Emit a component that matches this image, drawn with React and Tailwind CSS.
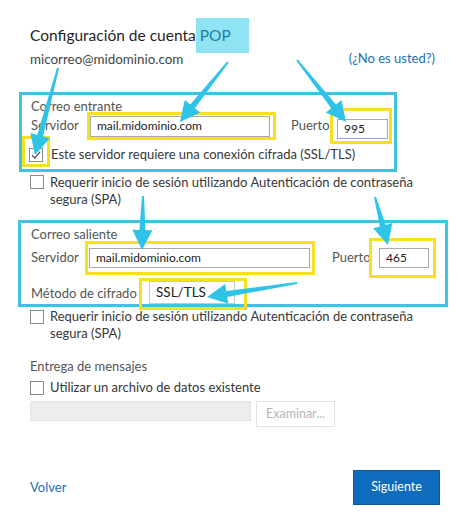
import React from 'react';

// Flecha cónica (cola fina, punta ancha) de (x1,y1) a (x2,y2)
function arrowPoints(x1, y1, x2, y2, w0 = 2, w1 = 6, hw = 20, hl = 20) {
  const dx = x2 - x1;
  const dy = y2 - y1;
  const len = Math.hypot(dx, dy);
  const ux = dx / len;
  const uy = dy / len;
  const nx = -uy;
  const ny = ux;
  const bx = x2 - ux * hl;
  const by = y2 - uy * hl;
  const p = (x, y) => `${x.toFixed(1)},${y.toFixed(1)}`;
  return [
    p(x1 + (nx * w0) / 2, y1 + (ny * w0) / 2),
    p(bx + (nx * w1) / 2, by + (ny * w1) / 2),
    p(bx + (nx * hw) / 2, by + (ny * hw) / 2),
    p(x2, y2),
    p(bx - (nx * hw) / 2, by - (ny * hw) / 2),
    p(bx - (nx * w1) / 2, by - (ny * w1) / 2),
    p(x1 - (nx * w0) / 2, y1 - (ny * w0) / 2),
  ].join(' ');
}

const arrows = [
  [58, 68, 35, 155],
  [228, 62, 180, 122],
  [297, 60, 346, 122],
  [143, 196, 142, 250],
  [375, 197, 388, 245],
  [297, 283, 207, 297],
];

function Checkbox({ checked = false }) {
  return (
    <span className="flex h-[14px] w-[14px] shrink-0 items-center justify-center border border-[#8a8a8a] bg-white">
      {checked ? (
        <svg width="12" height="12" viewBox="0 0 12 12">
          <path d="M2 6.2 L4.8 9 L10.2 2.6" fill="none" stroke="#555" strokeWidth="1.3" />
        </svg>
      ) : null}
    </span>
  );
}

function Input({ value, className }) {
  return (
    <div className={`flex items-center border border-[#a9a9a9] bg-white pl-[6px] text-[12px] text-[#222] ${className}`}>
      {value}
    </div>
  );
}

export default function App() {
  return (
    <div
      className="relative h-[517px] w-[474px] overflow-hidden bg-white pl-[30px] pr-[34px] text-[13px] text-[#3b3b3b]"
      style={{ fontFamily: 'Lato, "Noto Sans", sans-serif' }}
    >
      {/* Título */}
      <div className="mt-[18px] flex h-[35px] items-center text-[15.5px] text-[#1f1f1f]">
        <span>Configuración de cuenta</span>
        <span className="flex h-[35px] items-center bg-[#8fe3f2] pl-[4px] pr-[18px] text-[#1d7ea6]">POP</span>
      </div>

      <div className="-mt-[4px] flex h-[20px] items-center justify-between text-[#444]">
        <span className="text-[13.4px]">micorreo@midominio.com</span>
        <span className="mr-[5px] text-[#1b6fb8]">(¿No es usted?)</span>
      </div>

      {/* Correo entrante */}
      <div className="-ml-[11px] mt-[23px] h-[80px] w-[378px] border-[3px] border-[#3ec4e2]">
        <div className="h-[22px] pl-[9px] leading-[22px] text-[#555]">Correo entrante</div>
        <div className="-mt-[9px] flex h-[36px] items-center">
          <span className="w-[65px] pl-[9px] text-[#555]">Servidor</span>
          <div className="flex h-[28px] w-[189px] items-center border-[3px] border-[#f6e11c]">
            <Input value="mail.midominio.com" className="h-[21px] w-[180px]" />
          </div>
          <span className="ml-[15px] w-[39px] whitespace-nowrap text-[#555]">Puerto</span>
          <div className="flex h-[36px] w-[62px] items-end border-[3px] border-[#f6e11c] pb-[2px] pl-[4px]">
            <Input value="995" className="h-[20px] w-[51px]" />
          </div>
        </div>
        <div className="-mt-[8px] flex h-[31px] items-center">
          <div className="flex h-[31px] w-[28px] items-end justify-center border-[3px] border-[#f6e11c] pb-[2px]">
            <Checkbox checked />
          </div>
          <span className="ml-[1px] mt-[6px] whitespace-nowrap text-[#383838]">
            Este servidor requiere una conexión cifrada (SSL/TLS)
          </span>
        </div>
      </div>

      <div className="mt-[2px] flex leading-[17px] text-[#383838]">
        <span className="mt-[1px]">
          <Checkbox />
        </span>
        <span className="ml-[6px] whitespace-nowrap">
          Requerir inicio de sesión utilizando Autenticación de contraseña
          <br />
          segura (SPA)
        </span>
      </div>

      {/* Correo saliente */}
      <div className="-ml-[12px] mt-[12px] h-[87px] w-[430px] border-[3px] border-[#3ec4e2]">
        <div className="h-[22px] pl-[10px] leading-[22px] text-[#555]">Correo saliente</div>
        <div className="-mt-[7px] flex h-[40px] items-center">
          <span className="w-[64px] pl-[10px] text-[#555]">Servidor</span>
          <div className="flex h-[34px] w-[230px] items-center border-[3px] border-[#f6e11c] pl-[1px]">
            <Input value="mail.midominio.com" className="h-[20px] w-[221px]" />
          </div>
          <span className="ml-[17px] w-[37px] whitespace-nowrap text-[#555]">Puerto</span>
          <div className="flex h-[40px] w-[67px] items-center border-[3px] border-[#f6e11c] pl-[7px]">
            <Input value="465" className="h-[20px] w-[50px]" />
          </div>
        </div>
        <div className="flex h-[32px] items-center">
          <span className="w-[118px] whitespace-nowrap pl-[10px] text-[#555]">Método de cifrado</span>
          <div className="flex h-[32px] w-[108px] items-start border-[3px] border-[#f6e11c] pl-[7px]">
            <div className="flex h-[23px] w-[86px] items-center border border-[#c8c8c8] pl-[6px] text-[13.5px] text-[#222]">
              SSL/TLS
            </div>
          </div>
        </div>
      </div>

      <div className="mt-[1px] flex leading-[17px] text-[#383838]">
        <span className="mt-[2px]">
          <Checkbox />
        </span>
        <span className="ml-[6px] whitespace-nowrap">
          Requerir inicio de sesión utilizando Autenticación de contraseña
          <br />
          segura (SPA)
        </span>
      </div>

      {/* Entrega de mensajes */}
      <div className="mt-[14px] h-[20px] leading-[20px] text-[#555]">Entrega de mensajes</div>
      <div className="mt-[2px] flex h-[20px] items-center text-[#383838]">
        <Checkbox />
        <span className="ml-[6px]">Utilizar un archivo de datos existente</span>
      </div>
      <div className="mt-[3px] flex items-start">
        <div className="h-[20px] w-[221px] border border-[#e2e2e2] bg-[#ededed]" />
        <div className="ml-[5px] flex h-[26px] w-[79px] items-center justify-center border border-[#e2e2e2] text-[12.5px] text-[#b5b5b5]">
          Examinar...
        </div>
      </div>

      {/* Pie */}
      <div className="mt-[43px] flex items-center justify-between">
        <span className="text-[#1b6fb8]">Volver</span>
        <button
          type="button"
          className="flex h-[35px] w-[87px] items-center justify-center border border-[#0b5a9e] bg-[#0f6cbd] text-[12.5px] text-white"
        >
          Siguiente
        </button>
      </div>

      {/* Flechas de anotación */}
      <svg className="pointer-events-none absolute left-0 top-0" width="474" height="517">
        {arrows.map(([a, b, c, d], i) => (
          <polygon key={i} points={arrowPoints(a, b, c, d)} fill="#2fc4e7" />
        ))}
      </svg>
    </div>
  );
}
